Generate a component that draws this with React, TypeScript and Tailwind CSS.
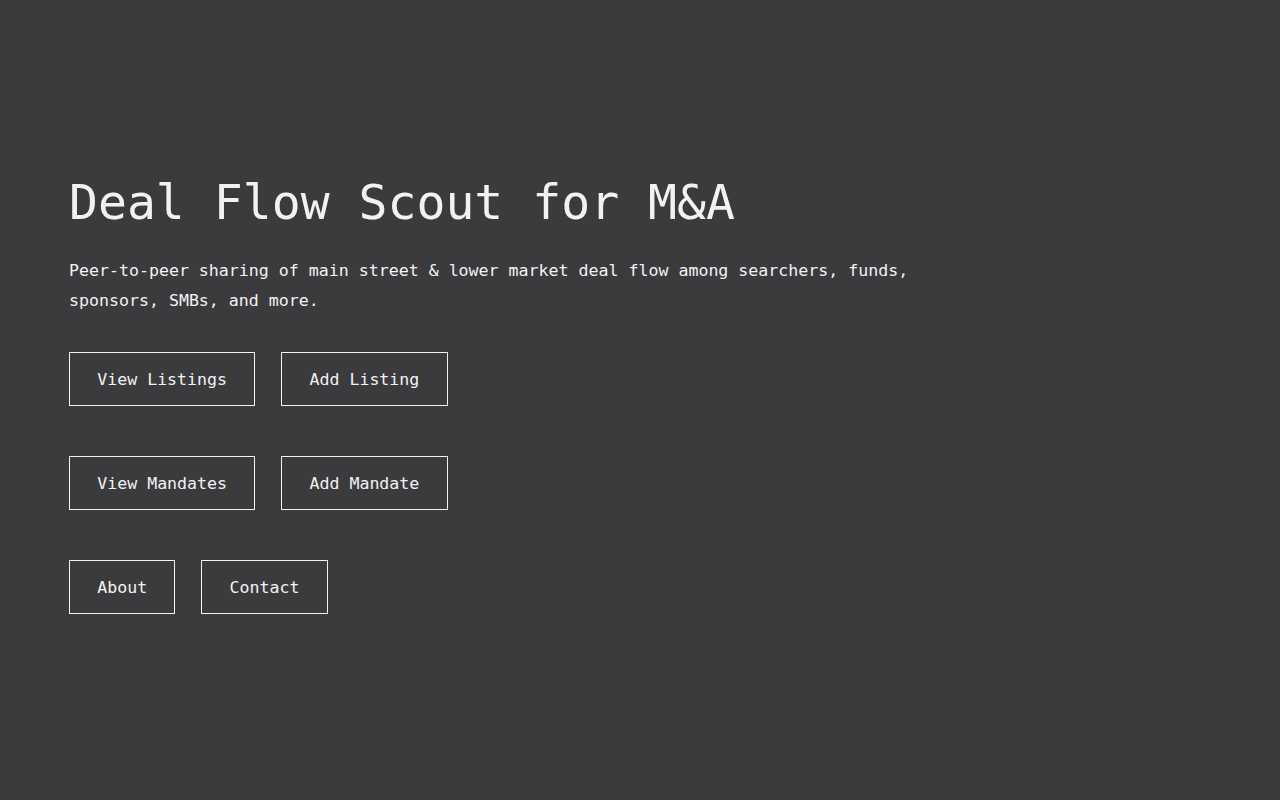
const mono = { fontFamily: '"DejaVu Sans Mono", "Liberation Mono", monospace' }

const rows = [
  ['View Listings', 'Add Listing'],
  ['View Mandates', 'Add Mandate'],
  ['About', 'Contact'],
]

export default function App() {
  return (
    <div className="min-h-screen bg-[#3b3b3d] text-[#f2f2f2]" style={mono}>
      <div className="pl-[69px] pt-[174px]">
        <h1 className="text-[48.1px] leading-[57.6px] font-normal">Deal Flow Scout for M&amp;A</h1>
        <p className="mt-[24px] max-w-[900px] text-[16.6px] leading-[30px]">
          Peer-to-peer sharing of main street &amp; lower market deal flow among searchers, funds, sponsors, SMBs, and more.
        </p>
        <div className="mt-[36px] flex flex-col gap-[50px]">
          {rows.map((row, i) => (
            <div key={i} className="flex gap-[26px]">
              {row.map((label) => (
                <a
                  key={label}
                  href="#"
                  className="border border-[#f2f2f2] px-[27.2px] pt-[17px] pb-[15px] text-[16.6px] leading-[20px] text-[#f2f2f2]"
                >
                  {label}
                </a>
              ))}
            </div>
          ))}
        </div>
      </div>
    </div>
  )
}
